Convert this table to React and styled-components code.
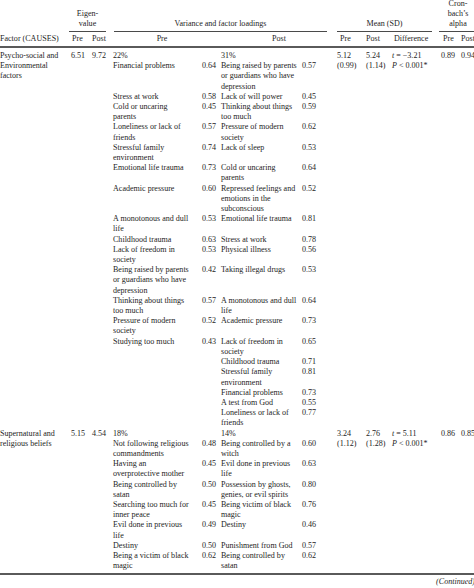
import React from "react";
import styled, { createGlobalStyle } from "styled-components";

const GlobalStyle = createGlobalStyle`
  html, body {
    margin: 0;
    padding: 0;
    background: #fff;
    overflow: hidden;
  }
  body {
    font-family: "Liberation Serif", "DejaVu Serif", serif;
    font-size: 8.05px;
    color: #1e1e1e;
  }
`;

const LINE = "10.2px";
const COLS = "71px 20px 22px 89px 19px 81px 35px 29px 26px 49px 20px 29px";

const Table = styled.div`
  width: 490px;
  margin-top: -1px;
`;

const HeadRow = styled.div`
  display: grid;
  grid-template-columns: ${COLS};
  align-items: end;
  line-height: 10px;
`;

const GroupHead = styled.div`
  grid-column: ${(p) => p.$col};
  margin: 0 ${(p) => p.$mr || 0}px 0 ${(p) => p.$ml || 0}px;
  padding-bottom: 2px;
  border-bottom: 1px solid #4a4a4a;
  text-align: center;
  white-space: pre-line;
`;

const SubHeadRow = styled(HeadRow)`
  padding: 2px 0 2px;
  border-bottom: 2px solid #5a5a5a;
`;

const SubHead = styled.div`
  grid-column: ${(p) => p.$col || "auto"};
  padding-left: ${(p) => p.$pl || 0}px;
  padding-right: ${(p) => p.$pr || 0}px;
  text-align: ${(p) => (p.$center ? "center" : "left")};
  white-space: nowrap;
`;

const Body = styled.div`
  padding-top: 3px;
  padding-bottom: 2px;
  border-bottom: 2px solid #5a5a5a;
  line-height: ${LINE};
`;

const Section = styled.div`
  display: grid;
  grid-template-columns: 71px 20px 22px 224px 29px 26px 49px 20px 29px;
  align-items: start;
`;

const Cell = styled.div`
  white-space: pre-line;
  padding-left: ${(p) => p.$pl || 0}px;
`;

const Items = styled.div`
  display: flex;
  flex-direction: column;
`;

const ItemRow = styled.div`
  display: grid;
  grid-template-columns: 89px 19px 81px 35px;
  align-items: start;
`;

const Em = styled.i`
  font-style: italic;
`;

const Footer = styled.div`
  width: 475px;
  text-align: right;
  padding-top: 2px;
  line-height: 10px;
  font-style: italic;
`;

const sections = [
  {
    factor: "Psycho-social and\nEnvironmental\nfactors",
    ePre: "6.51",
    ePost: "9.72",
    mPre: "5.12\n(0.99)",
    mPost: "5.24\n(1.14)",
    t: "\u22123.21",
    cPre: "0.89",
    cPost: "0.94",
    rows: [
      ["22%", "", "31%", ""],
      ["Financial problems", "0.64", "Being raised by parents\nor guardians who have\ndepression", "0.57"],
      ["Stress at work", "0.58", "Lack of will power", "0.45"],
      ["Cold or uncaring\nparents", "0.45", "Thinking about things\ntoo much", "0.59"],
      ["Loneliness or lack of\nfriends", "0.57", "Pressure of modern\nsociety", "0.62"],
      ["Stressful family\nenvironment", "0.74", "Lack of sleep", "0.53"],
      ["Emotional life trauma", "0.73", "Cold or uncaring\nparents", "0.64"],
      ["Academic pressure", "0.60", "Repressed feelings and\nemotions in the\nsubconscious", "0.52"],
      ["A monotonous and dull\nlife", "0.53", "Emotional life trauma", "0.81"],
      ["Childhood trauma", "0.63", "Stress at work", "0.78"],
      ["Lack of freedom in\nsociety", "0.53", "Physical illness", "0.56"],
      ["Being raised by parents\nor guardians who have\ndepression", "0.42", "Taking illegal drugs", "0.53"],
      ["Thinking about things\ntoo much", "0.57", "A monotonous and dull\nlife", "0.64"],
      ["Pressure of modern\nsociety", "0.52", "Academic pressure", "0.73"],
      ["Studying too much", "0.43", "Lack of freedom in\nsociety", "0.65"],
      ["", "", "Childhood trauma", "0.71"],
      ["", "", "Stressful family\nenvironment", "0.81"],
      ["", "", "Financial problems", "0.73"],
      ["", "", "A test from God", "0.55"],
      ["", "", "Loneliness or lack of\nfriends", "0.77"],
    ],
  },
  {
    factor: "Supernatural and\nreligious beliefs",
    ePre: "5.15",
    ePost: "4.54",
    mPre: "3.24\n(1.12)",
    mPost: "2.76\n(1.28)",
    t: "5.11",
    cPre: "0.86",
    cPost: "0.85",
    rows: [
      ["18%", "", "14%", ""],
      ["Not following religious\ncommandments", "0.48", "Being controlled by a\nwitch", "0.60"],
      ["Having an\noverprotective mother", "0.45", "Evil done in previous\nlife", "0.63"],
      ["Being controlled by\nsatan", "0.50", "Possession by ghosts,\ngenies, or evil spirits", "0.80"],
      ["Searching too much for\ninner peace", "0.45", "Being victim of black\nmagic", "0.76"],
      ["Evil done in previous\nlife", "0.49", "Destiny", "0.46"],
      ["Destiny", "0.50", "Punishment from God", "0.57"],
      ["Being a victim of black\nmagic", "0.62", "Being controlled by\nsatan", "0.62"],
    ],
  },
];

const FactorSection = ({ s }) => (
  <Section>
    <Cell>{s.factor}</Cell>
    <Cell>{s.ePre}</Cell>
    <Cell $pl={1}>{s.ePost}</Cell>
    <Items>
      {s.rows.map((r, i) => (
        <ItemRow key={i}>
          <Cell>{r[0]}</Cell>
          <Cell>{r[1]}</Cell>
          <Cell>{r[2]}</Cell>
          <Cell>{r[3]}</Cell>
        </ItemRow>
      ))}
    </Items>
    <Cell>{s.mPre}</Cell>
    <Cell>{s.mPost}</Cell>
    <Cell>
      <Em>t</Em> = {s.t}
      {"\n"}
      <Em>P</Em> &lt; 0.001*
    </Cell>
    <Cell>{s.cPre}</Cell>
    <Cell>{s.cPost}</Cell>
  </Section>
);

export default function App() {
  return (
    <>
      <GlobalStyle />
      <Table>
        <HeadRow>
          <GroupHead $col="2 / 4" $ml={-2} $mr={7}>{"Eigen-\nvalue"}</GroupHead>
          <GroupHead $col="4 / 8" $ml={1} $mr={10}>Variance and factor loadings</GroupHead>
          <GroupHead $col="8 / 11" $mr={9}>Mean (SD)</GroupHead>
          <GroupHead $col="11 / 13" $ml={-2} $mr={13}>{"Cron-\nbach\u2019s\nalpha"}</GroupHead>
        </HeadRow>
        <SubHeadRow>
          <SubHead>Factor (CAUSES)</SubHead>
          <SubHead $pl={1}>Pre</SubHead>
          <SubHead $pl={1}>Post</SubHead>
          <SubHead $col="4 / 6" $center $pr={10}>Pre</SubHead>
          <SubHead $col="6 / 8" $center>Post</SubHead>
          <SubHead $pl={3}>Pre</SubHead>
          <SubHead>Post</SubHead>
          <SubHead $pl={2}>Difference</SubHead>
          <SubHead $pl={2}>Pre</SubHead>
          <SubHead>Post</SubHead>
        </SubHeadRow>
        <Body>
          {sections.map((s, i) => (
            <FactorSection key={i} s={s} />
          ))}
        </Body>
        <Footer>(Continued)</Footer>
      </Table>
    </>
  );
}
